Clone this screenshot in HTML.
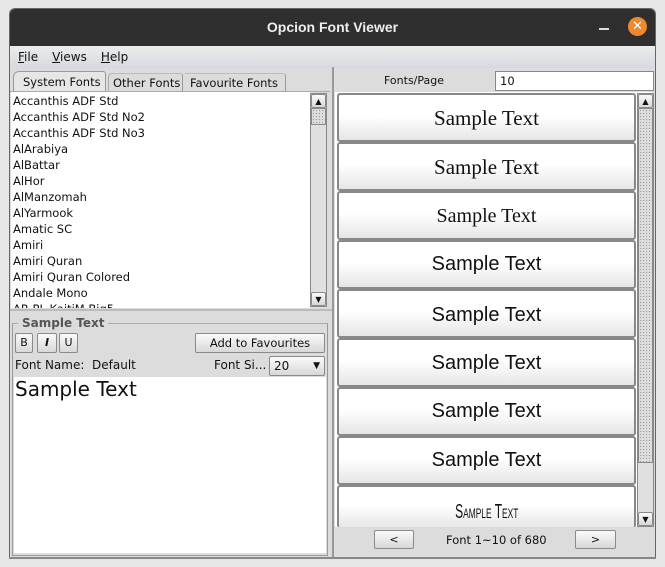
<!DOCTYPE html>
<html><head><meta charset="utf-8"><style>
*{margin:0;padding:0;box-sizing:border-box}
body{width:665px;height:567px;background:#e6e6e6;font-family:"DejaVu Sans","Liberation Sans",sans-serif;font-size:11px;color:#111;position:relative;overflow:hidden}
.a{position:absolute}
#win{left:9px;top:8px;width:647px;height:551px;background:#dcdcdc;border:1px solid #666;border-radius:6px 6px 0 0;overflow:hidden}
#title{left:0;top:0;width:100%;height:37px;background:#2f2f2f;color:#eee;font-weight:bold;font-size:14px;text-align:center;line-height:37px;font-family:"Liberation Sans",sans-serif}
#menu{left:0;top:37px;width:100%;height:22px;background:linear-gradient(#ececec,#d6d9de);font-size:12px;line-height:22px}
#menu span{margin-left:8px;margin-right:6px}
.btn{background:linear-gradient(#fafafa,#d8d8d8);border:1px solid #8a8a8a;border-radius:2px;text-align:center}
.sb{background:#e0e0e0;border:1px solid #888}
.dots{background-color:#ddd;background-image:radial-gradient(#999 0.6px,transparent 0.8px);background-size:3px 3px}
.fb{left:337px;width:299px;height:49px;border:2px solid #888;border-radius:3px;background:linear-gradient(#fff 45%,#e6e6e6);text-align:center;color:#111}
</style></head><body>
<div id="win" class="a">
<div id="title" class="a">Opcion Font Viewer</div>
<div class="a" style="left:589px;top:19px;width:10px;height:2px;background:#ddd"></div>
<div class="a" style="left:618px;top:8px;width:19px;height:19px;border-radius:50%;background:#f0892d;color:#fff;font-weight:bold;font-size:13px;line-height:19px;text-align:center">✕</div>
<div id="menu" class="a"><span><u>F</u>ile</span><span><u>V</u>iews</span><span><u>H</u>elp</span></div>
</div>
<div class="a" style="left:332px;top:67px;width:2px;height:490px;background:#999"></div>
<div class="a" style="left:13px;top:71px;width:93px;height:21px;background:#e6e6e6;border:1px solid #999;border-bottom:none;border-radius:6px 3px 0 0;line-height:20px;padding-left:9px;font-size:11.5px">System Fonts</div>
<div class="a" style="left:108px;top:73px;width:75px;height:19px;border-left:1px solid #aaa;border-right:1px solid #999;border-top:1px solid #bbb;border-radius:4px 3px 0 0;line-height:18px;padding-left:4px;font-size:11.5px">Other Fonts</div>
<div class="a" style="left:185px;top:73px;width:101px;height:19px;border-right:1px solid #999;border-top:1px solid #bbb;border-radius:0 3px 0 0;line-height:18px;padding-left:5px;font-size:11.5px">Favourite Fonts</div>
<div class="a" style="left:10px;top:91px;width:320px;height:1px;background:#aaa"></div>
<div class="a" style="left:11px;top:92px;width:300px;height:216px;background:#fff;overflow:hidden;line-height:16px;font-size:11.5px;padding-left:2px;padding-top:1px">
Accanthis ADF Std<br>Accanthis ADF Std No2<br>Accanthis ADF Std No3<br>AlArabiya<br>AlBattar<br>AlHor<br>AlManzomah<br>AlYarmook<br>Amatic SC<br>Amiri<br>Amiri Quran<br>Amiri Quran Colored<br>Andale Mono<br>AR PL KaitiM Big5</div>
<div class="a sb" style="left:310px;top:93px;width:17px;height:214px"></div>
<div class="a btn" style="left:311px;top:94px;width:15px;height:14px;font-size:8px;line-height:13px">▲</div>
<div class="a dots" style="left:311px;top:108px;width:15px;height:17px;border:1px solid #888"></div>
<div class="a btn" style="left:311px;top:292px;width:15px;height:14px;font-size:8px;line-height:13px">▼</div>
<div class="a" style="left:10px;top:309px;width:322px;height:2px;background:#bbb"></div>
<div class="a" style="left:12px;top:323px;width:316px;height:233px;border:1px solid #999;border-top-color:#aaa"></div>
<div class="a" style="left:18px;top:316px;background:#dcdcdc;color:#555;font-weight:bold;font-size:12px;padding:0 4px">Sample Text</div>
<div class="a btn" style="left:15px;top:333px;width:18px;height:20px;line-height:18px">B</div>
<div class="a btn" style="left:37px;top:333px;width:20px;height:20px;line-height:18px;font-weight:bold;font-style:italic">I</div>
<div class="a btn" style="left:59px;top:333px;width:19px;height:20px;line-height:18px">U</div>
<div class="a btn" style="left:195px;top:333px;width:130px;height:20px;line-height:18px;font-size:11.5px">Add to Favourites</div>
<div class="a" style="left:15px;top:358px;font-size:12px">Font Name:&nbsp; Default</div>
<div class="a" style="left:214px;top:358px;font-size:12px">Font Si...</div>
<div class="a btn" style="left:269px;top:356px;width:56px;height:20px;line-height:18px;text-align:left;padding-left:4px;font-size:12px">20<span style="position:absolute;right:4px;font-size:9px">▼</span></div>
<div class="a" style="left:14px;top:377px;width:312px;height:176px;background:#fff;font-size:20px;padding-left:1px;line-height:24px">Sample Text</div>
<div class="a" style="left:384px;top:74px;font-size:11px">Fonts/Page</div>
<div class="a" style="left:495px;top:71px;width:159px;height:20px;background:#fff;border:1px solid #888;line-height:18px;padding-left:4px;font-size:11.5px">10</div>
<div class="a" style="left:335px;top:92px;width:318px;height:436px;background:#fff"></div>
<div class="a fb" style="top:93px;font-family:'Liberation Serif',serif;font-size:21px;line-height:46px">Sample Text</div>
<div class="a fb" style="top:142px;font-family:'Liberation Serif',serif;font-size:21px;line-height:46px">Sample Text</div>
<div class="a fb" style="top:191px;font-family:'Liberation Serif',serif;font-size:20px;line-height:46px">Sample Text</div>
<div class="a fb" style="top:240px;font-family:'Liberation Sans',sans-serif;font-size:20px;line-height:44px">Sample Text</div>
<div class="a fb" style="top:289px;font-family:'Liberation Sans',sans-serif;font-size:20px;line-height:48px">Sample Text</div>
<div class="a fb" style="top:338px;font-family:'Liberation Sans',sans-serif;font-size:20px;line-height:46px">Sample Text</div>
<div class="a fb" style="top:387px;font-family:'Liberation Sans',sans-serif;font-size:20px;line-height:44px">Sample Text</div>
<div class="a fb" style="top:436px;font-family:'Liberation Sans',sans-serif;font-size:20px;line-height:44px">Sample Text</div>
<div class="a fb" style="top:485px;height:43px;border-bottom:none;font-family:'Liberation Sans Narrow','Liberation Sans',sans-serif;font-variant:small-caps;font-size:20px;line-height:50px"><span style="display:inline-block;transform:scaleX(0.6)">Sample Text</span></div>
<div class="a sb" style="left:637px;top:93px;width:17px;height:434px"></div>
<div class="a btn" style="left:638px;top:94px;width:15px;height:14px;font-size:8px;line-height:13px">▲</div>
<div class="a dots" style="left:638px;top:108px;width:15px;height:355px;border:1px solid #888"></div>
<div class="a btn" style="left:638px;top:512px;width:15px;height:14px;font-size:8px;line-height:13px">▼</div>
<div class="a" style="left:335px;top:527px;width:320px;height:30px;background:#dcdcdc"></div>
<div class="a btn" style="left:374px;top:530px;width:40px;height:19px;line-height:17px;font-size:11px">&lt;</div>
<div class="a" style="left:446px;top:533px;font-size:11.5px">Font 1~10 of 680</div>
<div class="a btn" style="left:575px;top:530px;width:41px;height:19px;line-height:17px;font-size:11px">&gt;</div>
<div class="a" style="left:9px;top:557px;width:647px;height:2px;background:#888"></div>
</body></html>
